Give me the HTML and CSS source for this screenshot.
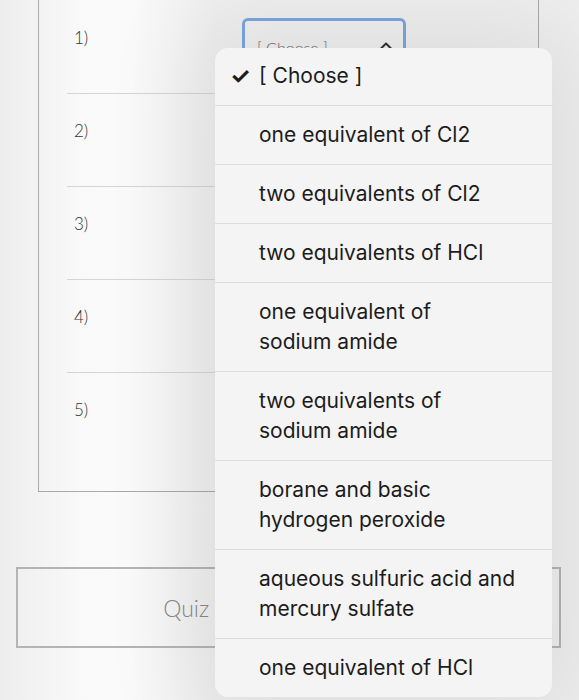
FILE: index.html
```html
<!DOCTYPE html>
<html lang="en">
<head>
    <meta charset="UTF-8">
    <meta name="viewport" content="width=device-width, initial-scale=1.0">
    <title>Quiz</title>
    <link rel="stylesheet" href="styles.css">
</head>
<body>

<div class="page">
    <div class="card">
        <div class="row">
            <div class="num">1)</div>
            <div class="select-wrap">
                <div class="select">
                    <span>[ Choose ]</span>
                    <svg class="chev" width="14" height="9" viewBox="0 0 14 9"><path d="M2 7.5 L7 2.5 L12 7.5" fill="none" stroke="#333" stroke-width="2" stroke-linecap="round" stroke-linejoin="round"/></svg>
                </div>
                <ul class="menu">
                    <li class="selected"><span class="check">✓</span>[ Choose ]</li>
                    <li>one equivalent of Cl2</li>
                    <li>two equivalents of Cl2</li>
                    <li>two equivalents of HCl</li>
                    <li>one equivalent of<br>sodium amide</li>
                    <li>two equivalents of<br>sodium amide</li>
                    <li>borane and basic<br>hydrogen peroxide</li>
                    <li>aqueous sulfuric acid and<br>mercury sulfate</li>
                    <li>one equivalent of HCl</li>
                </ul>
            </div>
        </div>
        <div class="row"><div class="num">2)</div></div>
        <div class="row"><div class="num">3)</div></div>
        <div class="row"><div class="num">4)</div></div>
        <div class="row"><div class="num">5)</div></div>
    </div>

    <div class="status">Quiz saved at 10:42 AM</div>
</div>

</body>
</html>
```

FILE: styles.css
```css
html, body {
    margin: 0;
    padding: 0;
    height: 100%;
    overflow: hidden;
}
body {
    font-family: Lato, "Open Sans", sans-serif;
    background: linear-gradient(to right, #ededed 0, #f9f9f9 80px, #fafafa 130px, #efefef 214px);
}
.page {
    padding: 0 18px 0 16px;
}
.card {
    margin: -20px 22px 0 22px;
    padding: 20px 0 26px 28px;
    border: 1px solid #a9a9a9;
}
.row {
    display: flex;
    height: 75px;
    padding: 17px 0 0 7px;
    border-bottom: 1px solid #d4d4d4;
}
.row:last-child {
    border-bottom: none;
}
.num {
    width: 168px;
    padding-top: 9px;
    font-size: 17px;
    font-weight: 300;
    color: #333;
}
.select-wrap {
    position: relative;
}
.select {
    display: flex;
    align-items: center;
    justify-content: space-between;
    width: 136px;
    height: 52px;
    padding: 0 10px 0 12px;
    border: 3px solid #7ba6de;
    border-radius: 6px;
    background: #f0f0f0;
    font-size: 16px;
    font-weight: 300;
    color: #666;
}
.chev {
    margin-top: -4px;
}
.menu {
    position: absolute;
    left: -27px;
    top: 30px;
    width: 337px;
    margin: 0;
    padding: 0;
    list-style: none;
    background: #f4f4f4;
    border-radius: 13px;
    box-shadow: 0 0 90px 30px rgba(0, 0, 0, 0.07);
    font-family: Inter, "Liberation Sans", sans-serif;
    font-size: 21px;
    line-height: 30px;
    color: #1c1c1c;
    z-index: 2;
}
.menu li {
    padding: 14px 10px 14px 44px;
    border-bottom: 1px solid #dcdcdc;
    white-space: nowrap;
}
.menu li:last-child {
    border-bottom: none;
}
.menu .selected {
    position: relative;
    padding-top: 13px;
}
.check {
    position: absolute;
    left: 15px;
    font-size: 23px;
    font-weight: 700;
}
.status {
    margin-top: 75px;
    height: 77px;
    display: flex;
    align-items: center;
    justify-content: center;
    padding-right: 10px;
    border: 2px solid #b4b4b4;
    font-size: 23px;
    font-weight: 300;
    color: #888;
}
```
